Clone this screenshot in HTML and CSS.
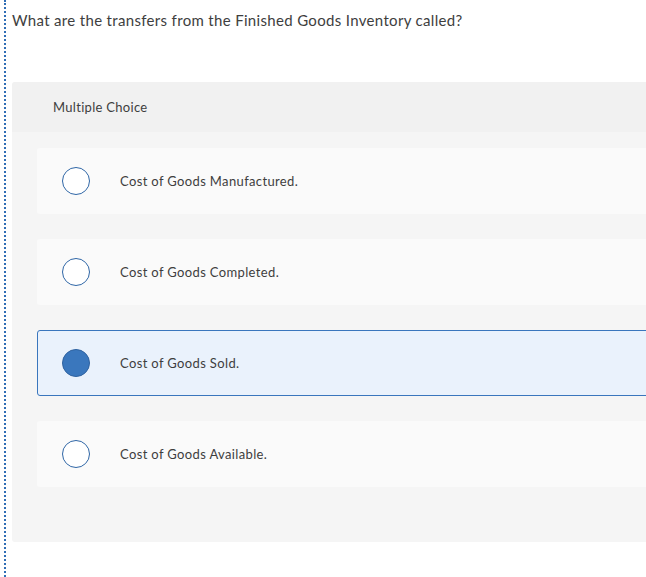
FILE: index.html
```html
<!DOCTYPE html>
<html>
<head>
<meta charset="utf-8">
<link rel="stylesheet" href="styles.css">
</head>
<body>
<div class="wrap">
  <div class="question">What are the transfers from the Finished Goods Inventory called?</div>
  <div class="panel">
    <div class="panel-head">Multiple Choice</div>
    <div class="options">
      <div class="option"><span class="radio"></span><span class="label">Cost of Goods Manufactured.</span></div>
      <div class="option"><span class="radio"></span><span class="label">Cost of Goods Completed.</span></div>
      <div class="option selected"><span class="radio"></span><span class="label">Cost of Goods Sold.</span></div>
      <div class="option"><span class="radio"></span><span class="label">Cost of Goods Available.</span></div>
    </div>
  </div>
</div>
</body>
</html>
```
FILE: styles.css
```css
html, body {
  margin: 0;
  padding: 0;
  background: #ffffff;
  overflow: hidden;
}
body {
  font-family: Lato, "Open Sans", "Liberation Sans", sans-serif;
  font-weight: 400;
  color: #3e3e3e;
}
.wrap {
  margin-left: 4px;
  border-left: 2px dotted #2f6db5;
  padding-left: 6px;
  min-height: 577px;
  box-sizing: border-box;
}
.question {
  padding-top: 10px;
  font-size: 15px;
  letter-spacing: 0.33px;
  line-height: 20px;
  height: 82px;
  box-sizing: border-box;
}
.panel {
  background: #f5f5f5;
  border-radius: 3px 0 0 3px;
  height: 460px;
  margin-right: -10px;
}
.panel-head {
  background: #f1f1f1;
  height: 50px;
  display: flex;
  align-items: center;
  padding-left: 41px;
  font-size: 13px;
  letter-spacing: 0.3px;
  border-radius: 3px 0 0 0;
}
.options {
  padding: 16px 0 0 25px;
  display: flex;
  flex-direction: column;
  gap: 25px;
}
.option {
  height: 66px;
  background: #fafafa;
  border-radius: 3px 0 0 3px;
  display: flex;
  align-items: center;
  padding-left: 25px;
  box-sizing: border-box;
  font-size: 13px;
  letter-spacing: 0.36px;
}
.option.selected {
  background: #eaf2fc;
  border: 1px solid #3a76bd;
  padding-left: 24px;
}
.radio {
  width: 28px;
  height: 28px;
  border-radius: 50%;
  border: 1.5px solid #2f66a6;
  box-sizing: border-box;
  background: #ffffff;
  flex: none;
}
.selected .radio {
  background: #3a77bd;
  border-color: #2f62a0;
}
.label {
  margin-left: 30px;
}
```
